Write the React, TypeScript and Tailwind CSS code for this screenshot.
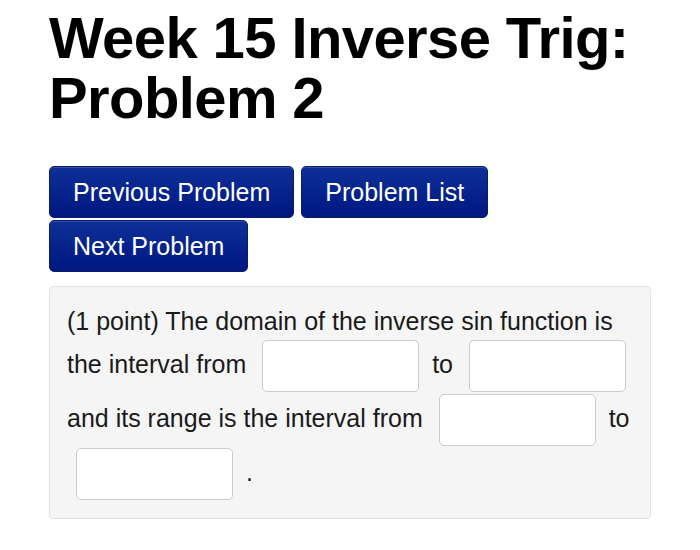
import React from 'react';

const NavButton: React.FC<{ label: string }> = ({ label }) => (
  <button className="h-[52px] px-[23px] rounded-[5px] border border-[#0a1d6b] bg-gradient-to-b from-[#0f2f98] to-[#001780] text-white text-[25px] leading-none shadow-[inset_0_1px_0_rgba(255,255,255,0.15)]">
    {label}
  </button>
);

const AnswerBox: React.FC = () => (
  <input
    type="text"
    className="inline-block align-middle w-[157px] h-[52px] ml-[9px] mr-[6px] my-[1px] rounded-[5px] border border-[#cccccc] bg-white"
  />
);

export default function App() {
  return (
    <div className="min-h-screen bg-white px-[49px] pt-[8px] font-['Liberation_Sans',Arial,sans-serif] text-black">
      {/* Title */}
      <h1 className="text-[58px] leading-[60px] font-bold tracking-[-0.6px]">
        Week 15 Inverse Trig:
        <br />
        Problem 2
      </h1>

      {/* Navigation */}
      <div className="mt-[38px] flex flex-wrap gap-x-[7px] gap-y-[2px]">
        <NavButton label="Previous Problem" />
        <NavButton label="Problem List" />
        <NavButton label="Next Problem" />
      </div>

      {/* Problem body */}
      <div className="mt-[14px] rounded-[4px] border border-[#e3e3e3] bg-[#f5f5f5] pl-[17px] pr-[15px] pt-[16px] pb-[17px] text-[25px] leading-[36px] text-[#1a1a1a]">
        (1 point) The domain of the inverse sin function is the interval from{' '}
        <AnswerBox />{' '}
        to{' '}
        <AnswerBox />{' '}
        and its range is the interval from{' '}
        <AnswerBox />{' '}
        to{' '}
        <AnswerBox />{' '}.
      </div>
    </div>
  );
}
